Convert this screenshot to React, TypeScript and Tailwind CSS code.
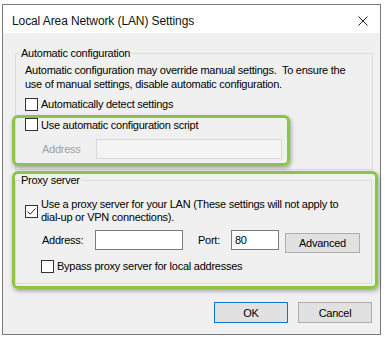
import { useState } from "react";

const Check = ({ checked, onChange }: { checked: boolean; onChange: () => void }) => (
  <button
    onClick={onChange}
    className="w-[13px] h-[13px] shrink-0 border border-[#333] bg-white flex items-center justify-center"
  >
    {checked && (
      <svg width="11" height="11" viewBox="0 0 11 11" fill="none" stroke="#222" strokeWidth="1">
        <path d="M1.5 5.5 L4.2 8.2 L9.5 2.5" />
      </svg>
    )}
  </button>
);

const App = () => {
  const [autoDetect, setAutoDetect] = useState(false);
  const [autoScript, setAutoScript] = useState(false);
  const [useProxy, setUseProxy] = useState(true);
  const [bypass, setBypass] = useState(false);
  const [address, setAddress] = useState("");
  const [port, setPort] = useState("80");

  return (
    <div className="w-[390px] h-[346px] bg-white pt-[4px] pl-[2px] font-['Liberation_Sans',Arial,sans-serif] text-[11px] leading-[14px] tracking-[-0.25px] text-black">
      <div className="w-[379px] h-[331px] border border-[#7a7a7a] bg-[#f0f0f0] flex flex-col">
        {/* Title bar */}
        <div className="h-[28px] bg-white flex items-center justify-between pl-[9px] pr-[8px] shrink-0">
          <span className="text-[12px] leading-[16px] tracking-[-0.1px] text-[#111] pt-[4px]">Local Area Network (LAN) Settings</span>
          <svg width="10" height="10" viewBox="0 0 10 10" stroke="#222" strokeWidth="1" className="mt-[4px] mr-[4px]">
            <path d="M0.5 0.5 L9.5 9.5 M9.5 0.5 L0.5 9.5" />
          </svg>
        </div>

        {/* Body */}
        <div className="flex flex-col pt-[13px] pl-[12px] pr-[7px]">
          {/* Automatic configuration */}
          <fieldset className="border border-[#dcdcdc] pl-[8px] pr-[10px] pt-[3px] pb-[3px]">
            <legend className="ml-[-4px] px-[1px] leading-[14px]">Automatic configuration</legend>
            <p className="pl-[1px] whitespace-nowrap">
              Automatic configuration may override manual settings.&nbsp; To ensure the
              <br />
              use of manual settings, disable automatic configuration.
            </p>
            <label className="flex items-center gap-[3px] mt-[6px] pl-[1px]">
              <Check checked={autoDetect} onChange={() => setAutoDetect(!autoDetect)} />
              <span>Automatically detect settings</span>
            </label>

            <div className="ml-[-12px] mt-[4px] w-[278px] border-[3px] border-[#8cc63f] rounded-[6px] shadow-[1px_2px_4px_rgba(0,0,0,0.35)] pl-[10px] pt-[0px] pb-[4px]">
              <label className="flex items-center gap-[3px] leading-[12px]">
                <Check checked={autoScript} onChange={() => setAutoScript(!autoScript)} />
                <span>Use automatic configuration script</span>
              </label>
              <div className="flex items-center mt-[8px] pl-[17px]">
                <span className="w-[54px] text-[#a0a0a0]">Address</span>
                <div className="w-[186px] h-[20px] border border-[#d9d9d9] bg-[#f4f4f4]" />
              </div>
            </div>
          </fieldset>

          {/* Proxy server */}
          <div className="ml-[-3px] mt-[1px] w-[366px] border-[3px] border-[#8cc63f] rounded-[6px] shadow-[1px_2px_4px_rgba(0,0,0,0.35)] pr-[3px] pb-[2px]">
            <fieldset className="border border-[#dcdcdc] pl-[9px] pb-[10px]">
              <legend className="ml-[-5px] px-[1px] leading-[12px]">Proxy server</legend>
              <label className="flex items-center gap-[3px] mt-[12px]">
                <Check checked={useProxy} onChange={() => setUseProxy(!useProxy)} />
                <span className="leading-[13px] whitespace-nowrap">
                  Use a proxy server for your LAN (These settings will not apply to
                  <br />
                  dial-up or VPN connections).
                </span>
              </label>
              <div className="flex items-start mt-[6px] pl-[17px]">
                <span className="w-[53px] leading-[20px]">Address:</span>
                <input
                  value={address}
                  onChange={(e) => setAddress(e.target.value)}
                  className="w-[88px] h-[20px] border border-[#7a7a7a] bg-white px-[3px] text-[11px] outline-none"
                />
                <span className="ml-[15px] w-[33px] leading-[20px]">Port:</span>
                <input
                  value={port}
                  onChange={(e) => setPort(e.target.value)}
                  className="w-[48px] h-[20px] border border-[#7a7a7a] bg-white px-[3px] text-[11px] outline-none"
                />
                <button className="ml-[6px] mt-[3px] w-[75px] h-[20px] border border-[#adadad] bg-[#e1e1e1]">
                  Advanced
                </button>
              </div>
              <label className="flex items-center gap-[3px] mt-[6px] pl-[16px]">
                <Check checked={bypass} onChange={() => setBypass(!bypass)} />
                <span>Bypass proxy server for local addresses</span>
              </label>
            </fieldset>
          </div>

          {/* Buttons */}
          <div className="flex justify-end gap-[10px] mt-[13px] pr-[1px]">
            <button className="w-[74px] h-[21px] border border-[#0078d7] bg-[#e1e1e1]">OK</button>
            <button className="w-[74px] h-[21px] border border-[#adadad] bg-[#e1e1e1]">Cancel</button>
          </div>
        </div>
      </div>
    </div>
  );
};

export default App;
